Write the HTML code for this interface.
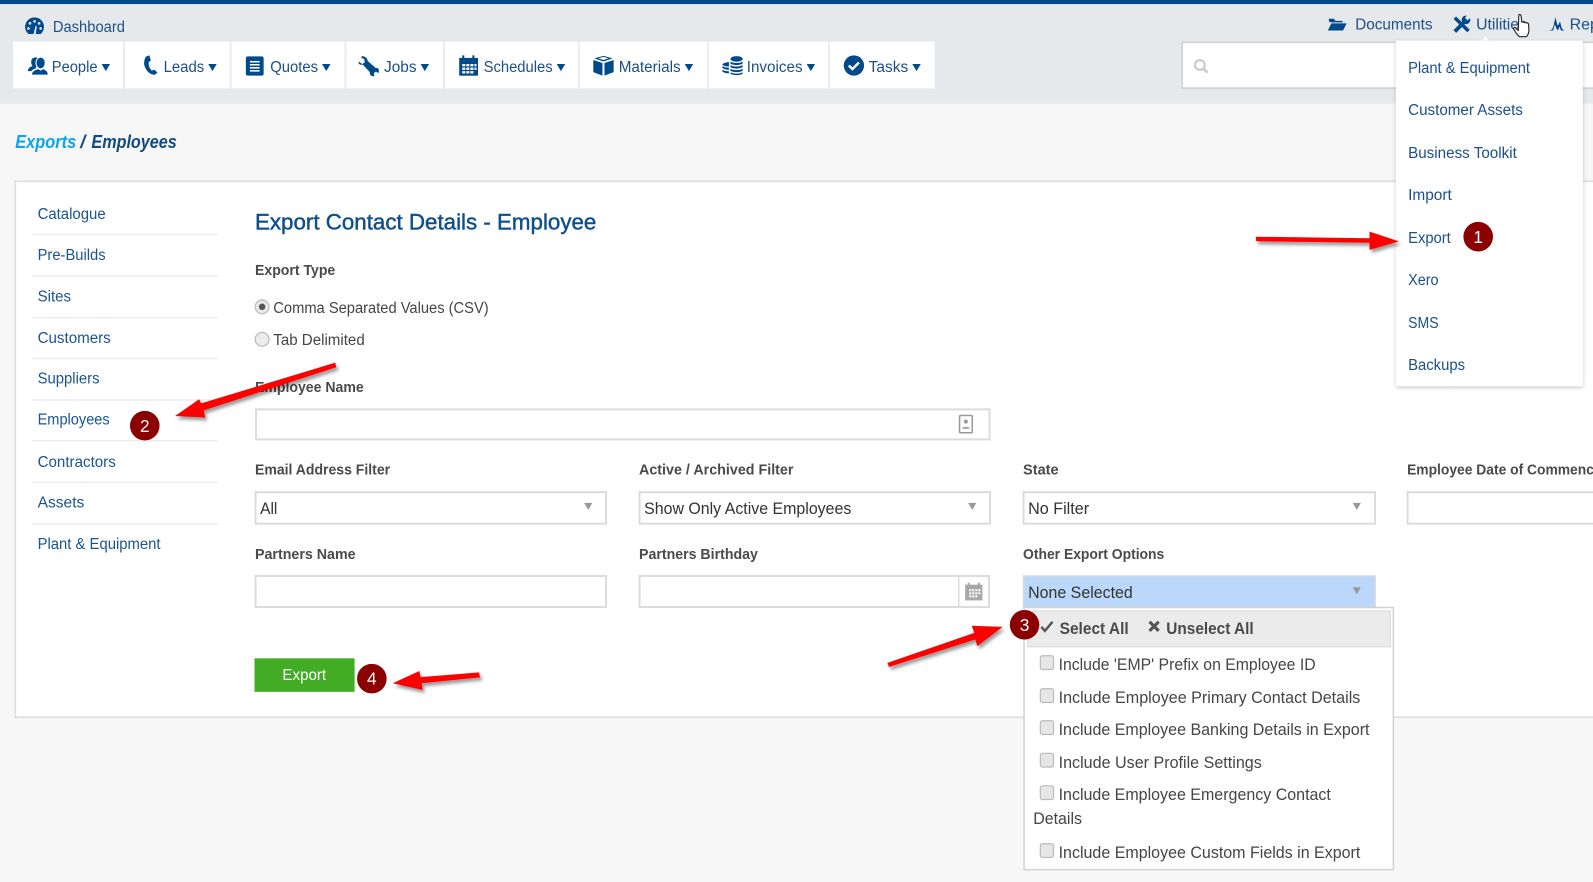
<!DOCTYPE html>
<html lang="en">
<head>
<meta charset="utf-8">
<title>Export Contact Details - Employee</title>
<style>
html,body{margin:0;padding:0;background:#f7f7f7;overflow:hidden}
svg{display:block;width:1593px;height:882px}
text{font-family:"Liberation Sans",Arial,sans-serif;font-size:15px;white-space:pre}
.n{fill:#1d5088}
.s{fill:#1a5590}
.l{fill:#4a4a4a;font-weight:bold;font-size:14.5px}
.d{fill:#454545}
.v{fill:#333;font-size:16px}
.ic{fill:#004a8c}
.in{fill:#fff;stroke:#dcdcdc;stroke-width:2}
.sep{fill:#ebecee}
.b{fill:#8b0000;stroke:#fff;stroke-width:.5}
.bt{fill:#fff;font-size:17px;text-anchor:middle}
.ar{fill:#f00;filter:url(#sh)}
.cb{fill:#e6e6e6;stroke:#bbb;stroke-width:1.2}
.car{fill:#999}
</style>
</head>
<body>
<svg viewBox="0 0 1568 868.18" xmlns="http://www.w3.org/2000/svg" preserveAspectRatio="none">
<defs>
<filter id="sh" x="-20%" y="-50%" width="140%" height="200%"><feDropShadow dx="2" dy="3" stdDeviation="1.5" flood-color="#000" flood-opacity=".4"/></filter>
<filter id="ds" x="-10%" y="-10%" width="120%" height="120%"><feDropShadow dx="0" dy="1.5" stdDeviation="2" flood-color="#000" flood-opacity=".22"/></filter>
</defs>

<!-- page + header -->
<rect width="1568" height="869" fill="#f7f7f7"/>
<rect width="1568" height="102" fill="#e6e9ec"/>
<rect width="1568" height="4" fill="#004a8c"/>

<!-- dashboard -->
<path class="ic" d="M28 33.500A9.300 9.300 0 1 1 40 33.500z"/>
<g fill="#e6e9ec"><circle cx="34" cy="21" r="1.300"/><circle cx="29.500" cy="23" r="1.300"/><circle cx="38.500" cy="23" r="1.300"/><circle cx="28" cy="28" r="1.300"/><circle cx="40" cy="28" r="1.300"/><path d="M33 33.500l2-8 1.200.4-1 7.600z"/></g>
<text class="n" x="52" y="31.700" textLength="71" lengthAdjust="spacingAndGlyphs">Dashboard</text>

<!-- top-right links -->
<path class="ic" d="M1308 21v-2.500h5l1.500 2h7v1.500h-11.500zM1307 30l3.500-7h15l-3.500 7z"/>
<text class="n" x="1334" y="29" textLength="76" lengthAdjust="spacingAndGlyphs">Documents</text>
<path d="M1432 17.500l13.500 13" stroke="#004a8c" stroke-width="3.500" fill="none"/>
<path d="M1432 31l11-11" stroke="#004a8c" stroke-width="3.800" fill="none"/>
<circle class="ic" cx="1443" cy="19.500" r="4.300"/>
<path d="M1445 14l3 3-3.500 3-2.500-2.500z" fill="#e6e9ec"/>
<text class="n" x="1453" y="29" textLength="50" lengthAdjust="spacingAndGlyphs">Utilities</text>
<path class="ic" d="M1524 30c3 0 4-1 5-4l2-9 2 8 1-.5 1.500-3.500 1.500 6c.7 2 2 3 3.500 3h-4l-1.500-4-1 3-.5 1-1.500-2-1.500-4-1.500 5-.5 1z"/>
<text class="n" x="1545" y="29" textLength="55" lengthAdjust="spacingAndGlyphs">Reports</text>

<!-- main nav -->
<rect x="13" y="41" width="907" height="46" fill="#fff"/>
<g class="sep"><rect x="121" y="41" width="2" height="46"/><rect x="226" y="41" width="2" height="46"/><rect x="339" y="41" width="2" height="46"/><rect x="436" y="41" width="2" height="46"/><rect x="569" y="41" width="2" height="46"/><rect x="696" y="41" width="2" height="46"/><rect x="815" y="41" width="2" height="46"/></g>

<path class="ic" d="M32.500 57.500c1.500-1.200 3.500-1.200 4.500-.5-2.200 2-2.700 5.500-1.200 8.500l-.8 2c-2 .5-3.500 1.200-4 2.500h-3.500c0-3 2-4 4.500-5-1.800-2.500-1.800-6.200.5-8z"/>
<ellipse class="ic" cx="40" cy="62" rx="4" ry="5.300"/>
<path class="ic" d="M31.500 73.500c0-3.500 3.500-4.500 6-5.500l2.500 1.500 2.500-1.500c2 1 4.500 2 4.500 5.500z"/>
<text class="n" x="51" y="71" textLength="45" lengthAdjust="spacingAndGlyphs">People</text>
<path class="ic" d="M100 63h8.300l-4.150 7z"/>

<path class="ic" d="M144 55.500l3-1 1.500 5-2 1.500c-.5 3 .5 6 3 8.500l2.500-1 3 3-2.500 2c-5 .5-9-4-10.500-9.500-.5-3.500 .5-7 2-8.500z"/>
<text class="n" x="161" y="71" textLength="40" lengthAdjust="spacingAndGlyphs">Leads</text>
<path class="ic" d="M205 63h8.300l-4.150 7z"/>

<rect class="ic" x="242" y="55.500" width="17.500" height="19" rx="2"/>
<g fill="#fff"><rect x="246" y="60" width="9.500" height="1.500"/><rect x="246" y="63" width="9.500" height="1.500"/><rect x="246" y="66" width="9.500" height="1.500"/><rect x="246" y="69" width="9.500" height="1.500"/></g>
<text class="n" x="266" y="71" textLength="47" lengthAdjust="spacingAndGlyphs">Quotes</text>
<path class="ic" d="M317 63h8.300l-4.150 7z"/>

<path class="ic" d="M353 60.500l3.500 2.500 2.500-1.500-.5-3.500c-2-.5-3.500-.8-2.500-2.500 3-.5 5.500 1.500 6 4.500l8 7c3-.5 3.500 2 2.500 5l-2.500-1.500-2 1.500.5 3c-2.500.5-5-1-4.500-4l-7-7.500c-3 1-4.500-1-4-3.500z"/>
<text class="n" x="378" y="71" textLength="32" lengthAdjust="spacingAndGlyphs">Jobs</text>
<path class="ic" d="M414 63h8.300l-4.150 7z"/>

<rect class="ic" x="452" y="57" width="18.500" height="17.500"/>
<rect class="ic" x="455" y="54.500" width="2" height="4"/><rect class="ic" x="465" y="54.500" width="2" height="4"/>
<g fill="#fff"><rect x="455" y="63" width="3" height="2.300"/><rect x="459" y="63" width="3" height="2.300"/><rect x="463" y="63" width="3" height="2.300"/><rect x="467" y="63" width="2" height="2.300"/><rect x="455" y="66.500" width="3" height="2.300"/><rect x="459" y="66.500" width="3" height="2.300"/><rect x="463" y="66.500" width="3" height="2.300"/><rect x="467" y="66.500" width="2" height="2.300"/><rect x="455" y="70" width="3" height="2.300"/><rect x="459" y="70" width="3" height="2.300"/><rect x="463" y="70" width="3" height="2.300"/></g>
<text class="n" x="476" y="71" textLength="68" lengthAdjust="spacingAndGlyphs">Schedules</text>
<path class="ic" d="M548 63h8.300l-4.150 7z"/>

<path class="ic" d="M584 59v12l9 3.500V62zM604 59v12l-9 3.500V62zM585 57.500l9-2.500 9 2.500-9 3z"/>
<path fill="#fff" d="M589 57.500l5-1.500 5 1.500-5 1.500z"/>
<text class="n" x="609" y="71" textLength="61" lengthAdjust="spacingAndGlyphs">Materials</text>
<path class="ic" d="M674 63h8.300l-4.150 7z"/>

<g class="ic"><ellipse cx="725" cy="58" rx="6" ry="2.800"/><path d="M719 60.500c2 2 10 2 12 0v2c-2 2-10 2-12 0zM719 64c2 2 10 2 12 0v2c-2 2-10 2-12 0zM719 67.500c2 2 10 2 12 0v2c-2 2-10 2-12 0zM719 71c2 2 10 2 12 0v1.500c-2 2-10 2-12 0z"/><path d="M717.500 61c-3 .3-6 1.200-6.500 2.500.5 1 3 2 6.500 2zM711 65c1 1 3.500 1.500 6.500 1.700v2c-3-.2-5.500-.7-6.500-2zM711 68.500c1 1 3.500 1.500 6.500 1.700v2c-3-.2-5.500-.7-6.500-2z"/></g>
<text class="n" x="735" y="71" textLength="55" lengthAdjust="spacingAndGlyphs">Invoices</text>
<path class="ic" d="M794 63h8.300l-4.150 7z"/>

<circle class="ic" cx="840.500" cy="64.500" r="10"/>
<path d="M835.500 64.500l3.500 3.500 6.500-6.500" fill="none" stroke="#fff" stroke-width="2.400"/>
<text class="n" x="855" y="71" textLength="39" lengthAdjust="spacingAndGlyphs">Tasks</text>
<path class="ic" d="M898 63h8.300l-4.150 7z"/>

<!-- search -->
<rect x="1163.700" y="41.700" width="420" height="45" fill="#fff" stroke="#cfcfcf" stroke-width="1.500"/>
<circle cx="1181" cy="64" r="4.800" fill="none" stroke="#ccc" stroke-width="2.200"/>
<path d="M1184.500 67.500l4 4" stroke="#ccc" stroke-width="2.800"/>

<!-- breadcrumb -->
<g font-style="italic" font-weight="bold">
<text x="15" y="145.500" fill="#0ba5ec" textLength="60" lengthAdjust="spacingAndGlyphs" style="font-size:18px">Exports</text>
<text x="79" y="145.500" style="font-size:18px" fill="#0f4a83">/</text>
<text x="90" y="145.500" style="font-size:18px" fill="#0f4a83" textLength="84" lengthAdjust="spacingAndGlyphs">Employees</text>
</g>

<!-- panel -->
<rect x="15" y="178.500" width="1600" height="527.500" fill="#fff" stroke="#e0e0e0" stroke-width="1.800"/>

<!-- sidebar -->
<g class="sep"><rect x="32" y="230" width="182" height="1.500"/><rect x="32" y="271" width="182" height="1.500"/><rect x="32" y="312" width="182" height="1.500"/><rect x="32" y="352" width="182" height="1.500"/><rect x="32" y="393" width="182" height="1.500"/><rect x="32" y="433" width="182" height="1.500"/><rect x="32" y="474" width="182" height="1.500"/><rect x="32" y="515" width="182" height="1.500"/></g>
<text class="s" x="37" y="215.500" textLength="67" lengthAdjust="spacingAndGlyphs">Catalogue</text>
<text class="s" x="37" y="255.700" textLength="67" lengthAdjust="spacingAndGlyphs">Pre-Builds</text>
<text class="s" x="37" y="297" textLength="33" lengthAdjust="spacingAndGlyphs">Sites</text>
<text class="s" x="37" y="337.500" textLength="72" lengthAdjust="spacingAndGlyphs">Customers</text>
<text class="s" x="37" y="377.700" textLength="61" lengthAdjust="spacingAndGlyphs">Suppliers</text>
<text class="s" x="37" y="418" textLength="71" lengthAdjust="spacingAndGlyphs">Employees</text>
<text class="s" x="37" y="459.500" textLength="77" lengthAdjust="spacingAndGlyphs">Contractors</text>
<text class="s" x="37" y="499.700" textLength="46" lengthAdjust="spacingAndGlyphs">Assets</text>
<text class="s" x="37" y="540.500" textLength="121" lengthAdjust="spacingAndGlyphs">Plant &amp; Equipment</text>

<!-- form -->
<text x="251" y="226" style="font-size:22px;stroke:#0f4f8e;stroke-width:.45" fill="#0f4f8e" textLength="336" lengthAdjust="spacingAndGlyphs">Export Contact Details - Employee</text>
<text class="l" x="251" y="270.500" textLength="79" lengthAdjust="spacingAndGlyphs">Export Type</text>

<circle cx="258" cy="302" r="6.800" fill="#e8e8e8" stroke="#bbb" stroke-width="1.200"/>
<circle cx="258" cy="302" r="3.200" fill="#555"/>
<text class="d" x="269" y="308" textLength="212" lengthAdjust="spacingAndGlyphs">Comma Separated Values (CSV)</text>
<circle cx="258" cy="334" r="6.800" fill="#ececec" stroke="#bbb" stroke-width="1.200"/>
<text class="d" x="269" y="339.500" textLength="90" lengthAdjust="spacingAndGlyphs">Tab Delimited</text>

<text class="l" x="251" y="386" textLength="107" lengthAdjust="spacingAndGlyphs">Employee Name</text>
<rect class="in" x="252" y="403" width="722" height="29.500"/>
<rect x="944.500" y="409" width="12.500" height="17" rx="1" fill="none" stroke="#999" stroke-width="1.500"/>
<circle cx="950.700" cy="415" r="2" fill="#999"/><path d="M947 422c0-2.500 7.500-2.500 7.500 0z" fill="#999"/>

<text class="l" x="251" y="467.300" textLength="133" lengthAdjust="spacingAndGlyphs">Email Address Filter</text>
<text class="l" x="629" y="467.300" textLength="152" lengthAdjust="spacingAndGlyphs">Active / Archived Filter</text>
<text class="l" x="1007" y="467.300" textLength="35" lengthAdjust="spacingAndGlyphs">State</text>
<text class="l" x="1385" y="467.300" textLength="224" lengthAdjust="spacingAndGlyphs">Employee Date of Commencement</text>

<rect class="in" x="251.500" y="484.500" width="345" height="31"/>
<text class="v" x="256" y="506" textLength="17" lengthAdjust="spacingAndGlyphs">All</text>
<path class="car" d="M575 495h8l-4 7z"/>
<rect class="in" x="629.500" y="484.500" width="345" height="31"/>
<text class="v" x="634" y="506" textLength="204" lengthAdjust="spacingAndGlyphs">Show Only Active Employees</text>
<path class="car" d="M953 495h8l-4 7z"/>
<rect class="in" x="1007.500" y="484.500" width="346" height="31"/>
<text class="v" x="1012" y="506" textLength="60" lengthAdjust="spacingAndGlyphs">No Filter</text>
<path class="car" d="M1331.500 495h8l-4 7z"/>
<rect class="in" x="1385.500" y="484.500" width="250" height="31"/>

<text class="l" x="251" y="550.300" textLength="99" lengthAdjust="spacingAndGlyphs">Partners Name</text>
<text class="l" x="629" y="550.300" textLength="117" lengthAdjust="spacingAndGlyphs">Partners Birthday</text>
<text class="l" x="1007" y="550.300" textLength="139" lengthAdjust="spacingAndGlyphs">Other Export Options</text>

<rect class="in" x="251.500" y="567" width="345" height="30.500"/>
<rect class="in" x="629.500" y="567" width="344" height="30.500"/>
<rect x="943" y="567" width="1.500" height="30" fill="#dcdcdc"/>
<g transform="translate(-1 0)">
<rect x="951" y="575.500" width="17" height="15.500" fill="#a8a8a8"/>
<rect x="953.500" y="573.500" width="2" height="3" fill="#a8a8a8"/><rect x="963.500" y="573.500" width="2" height="3" fill="#a8a8a8"/>
<g fill="#fff"><rect x="955" y="580" width="2" height="2"/><rect x="958" y="580" width="2" height="2"/><rect x="961" y="580" width="2" height="2"/><rect x="964" y="580" width="2" height="2"/><rect x="955" y="583" width="2" height="2"/><rect x="958" y="583" width="2" height="2"/><rect x="961" y="583" width="2" height="2"/><rect x="964" y="583" width="2" height="2"/><rect x="955" y="586" width="2" height="2"/><rect x="958" y="586" width="2" height="2"/><rect x="961" y="586" width="2" height="2"/></g>
</g>

<!-- other options dropdown -->
<rect x="1007.500" y="567" width="346" height="31" fill="#bbd8fb" stroke="#d4d8dc" stroke-width="1.500"/>
<text class="v" x="1012" y="588.500" textLength="103" lengthAdjust="spacingAndGlyphs">None Selected</text>
<path class="car" d="M1331.500 578h8l-4 7z"/>

<rect x="1008" y="598" width="363.500" height="258" fill="#fff" stroke="#d2d2d2" stroke-width="1.500"/>
<rect x="1011.500" y="601.500" width="357" height="35" fill="#ebebeb" stroke="#e0e0e0" stroke-width="1.500"/>
<path d="M1025 617l3.500 4 7.500-9" fill="none" stroke="#555" stroke-width="2.400"/>
<text x="1043" y="624" style="font-size:16px;font-weight:bold" fill="#4a4a4a" textLength="68" lengthAdjust="spacingAndGlyphs">Select All</text>
<path d="M1131.500 612l9 9M1140.500 612l-9 9" fill="none" stroke="#555" stroke-width="3"/>
<text x="1148" y="624" style="font-size:16px;font-weight:bold" fill="#4a4a4a" textLength="86" lengthAdjust="spacingAndGlyphs">Unselect All</text>

<rect class="cb" x="1024" y="645.500" width="13" height="13.500" rx="2"/>
<text class="d" x="1042" y="659.300" style="font-size:16px" textLength="253" lengthAdjust="spacingAndGlyphs">Include 'EMP' Prefix on Employee ID</text>
<rect class="cb" x="1024" y="678" width="13" height="13.500" rx="2"/>
<text class="d" x="1042" y="692" style="font-size:16px" textLength="297" lengthAdjust="spacingAndGlyphs">Include Employee Primary Contact Details</text>
<rect class="cb" x="1024" y="709.500" width="13" height="13.500" rx="2"/>
<text class="d" x="1042" y="723.500" style="font-size:16px" textLength="306" lengthAdjust="spacingAndGlyphs">Include Employee Banking Details in Export</text>
<rect class="cb" x="1024" y="741.500" width="13" height="13.500" rx="2"/>
<text class="d" x="1042" y="755.800" style="font-size:16px" textLength="200" lengthAdjust="spacingAndGlyphs">Include User Profile Settings</text>
<rect class="cb" x="1024" y="773.500" width="13" height="13.500" rx="2"/>
<text class="d" x="1042" y="787.500" style="font-size:16px" textLength="268" lengthAdjust="spacingAndGlyphs">Include Employee Emergency Contact</text>
<text class="d" x="1017" y="811" style="font-size:16px" textLength="48" lengthAdjust="spacingAndGlyphs">Details</text>
<rect class="cb" x="1024" y="830.500" width="13" height="13.500" rx="2"/>
<text class="d" x="1042" y="844.500" style="font-size:16px" textLength="297" lengthAdjust="spacingAndGlyphs">Include Employee Custom Fields in Export</text>

<!-- export button -->
<rect x="250.500" y="648" width="98.500" height="33" fill="#43ac25"/>
<text x="278" y="669.300" fill="#fff" textLength="43" lengthAdjust="spacingAndGlyphs">Export</text>

<!-- utilities dropdown -->
<path d="M1458 40l4-4 4 4z" fill="#fff"/>
<rect x="1374" y="40" width="184" height="340" fill="#fff" filter="url(#ds)"/>
<text class="n" x="1386" y="72" textLength="120" lengthAdjust="spacingAndGlyphs">Plant &amp; Equipment</text>
<text class="n" x="1386" y="113" textLength="113" lengthAdjust="spacingAndGlyphs">Customer Assets</text>
<text class="n" x="1386" y="155.400" textLength="107" lengthAdjust="spacingAndGlyphs">Business Toolkit</text>
<text class="n" x="1386" y="197" textLength="43" lengthAdjust="spacingAndGlyphs">Import</text>
<text class="n" x="1386" y="239" textLength="42" lengthAdjust="spacingAndGlyphs">Export</text>
<text class="n" x="1386" y="280.500" textLength="30" lengthAdjust="spacingAndGlyphs">Xero</text>
<text class="n" x="1386" y="322.700" textLength="30" lengthAdjust="spacingAndGlyphs">SMS</text>
<text class="n" x="1386" y="364" textLength="56" lengthAdjust="spacingAndGlyphs">Backups</text>

<!-- hand cursor -->
<path d="M1495 14.500c1.200-.5 2 0 2.200 1l.8 6.500c.6-1 2-.6 2.300.3.600-.8 1.900-.4 2.200.5.700-.6 1.900-.2 2 .8l.4 6c0 3-1 5-2.500 6.500h-7c-1.500-1.500-4-4.500-5.500-7.500-.5-1.200 1-2 2-1l2.500 2.500z" fill="#fff" stroke="#222" stroke-width="1.100" stroke-linejoin="round"/>

<!-- arrows -->
<path class="ar" d="M1236 233l112 1.500V228l29 9.600-29 8.400V239l-111.500-1.500z"/>
<path class="ar" d="M330 357L198 397l-2-4-23.700 16.500 29.700 1.500-1.500-7L331 361.500z"/>
<path class="ar" d="M873.500 652.500L959 623l-2.500-7 30.500 1-25 19-2-6.500-85 27z"/>
<path class="ar" d="M471.500 661.800L414 666.500l-1.200-6-26.300 12.100 29.500 6.600-1-6.600 57.500-5.900z"/>

<!-- badges -->
<circle class="b" cx="1455" cy="233" r="14.800"/><text class="bt" x="1455" y="239">1</text>
<circle class="b" cx="142.500" cy="419" r="14.800"/><text class="bt" x="142.500" y="425">2</text>
<circle class="b" cx="1008.500" cy="615" r="14.800"/><text class="bt" x="1008.500" y="621">3</text>
<circle class="b" cx="366" cy="668" r="14.800"/><text class="bt" x="366" y="674">4</text>
</svg>
</body>
</html>
